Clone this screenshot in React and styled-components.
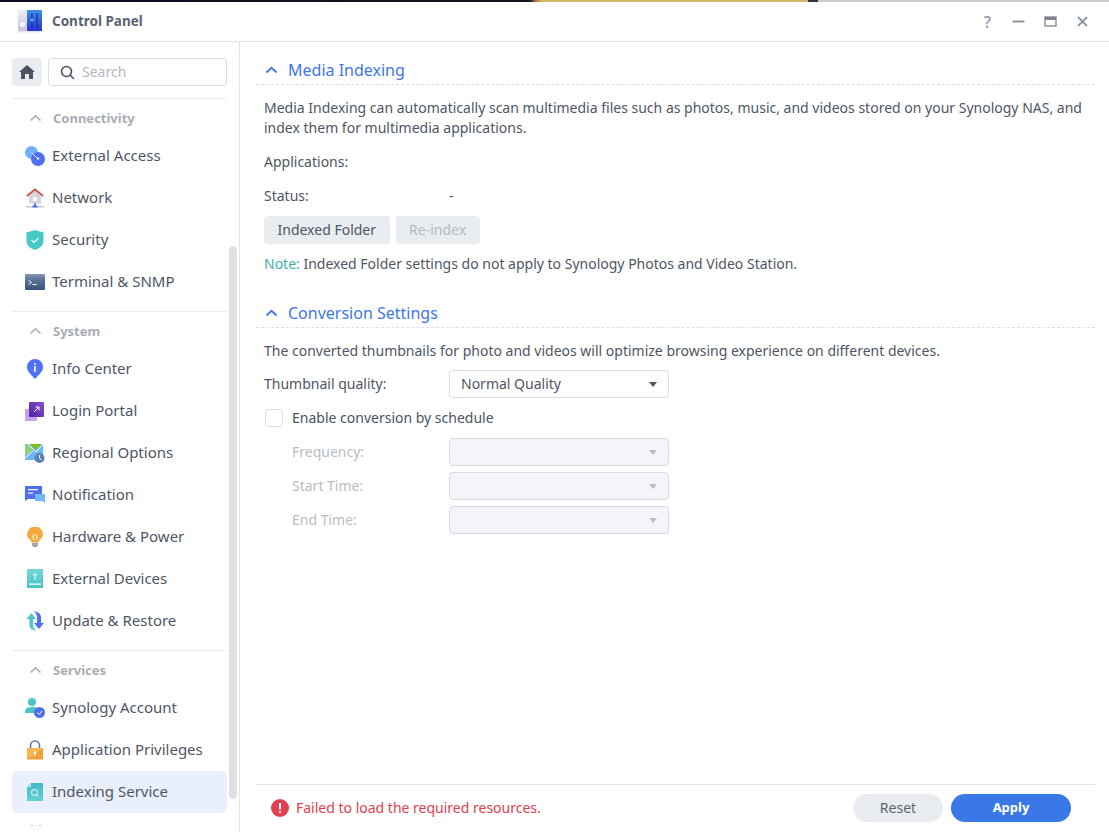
import React from "react";
import styled, { createGlobalStyle } from "styled-components";

const GlobalStyle = createGlobalStyle`
  html, body {
    margin: 0;
    padding: 0;
    height: 100%;
    overflow: hidden;
    background: #fff;
  }
  #root { height: 100%; }
`;

const Page = styled.div`
  display: flex;
  flex-direction: column;
  width: 1109px;
  height: 832px;
  overflow: hidden;
  font-family: "Noto Sans", "Liberation Sans", sans-serif;
  font-size: 14px;
  color: #4a5362;
`;

const DesktopStrip = styled.div`
  flex: none;
  height: 2px;
  background: linear-gradient(
    90deg,
    #0a0d1a 0,
    #11151f 530px,
    #c9743a 536px,
    #d3b768 542px,
    #d3b768 808px,
    #33353a 808px,
    #33353a 818px,
    #cccccc 818px
  );
`;

const TitleBar = styled.header`
  flex: none;
  display: flex;
  align-items: center;
  height: 39px;
  padding: 0 18px;
  border-bottom: 1px solid #e2e5ea;
`;

const AppLogo = styled.svg`
  width: 24px;
  height: 24px;
  margin-right: 10px;
`;

const AppTitle = styled.div`
  flex: 1;
  padding-bottom: 2px;
  font-size: 13.5px;
  font-weight: 700;
  color: #5b6370;
`;

const WindowButtons = styled.div`
  display: flex;
  align-items: center;
  gap: 8px;
  margin-right: -3px;
`;

const WindowButton = styled.button`
  display: flex;
  align-items: center;
  justify-content: center;
  width: 24px;
  height: 24px;
  padding: 0;
  border: none;
  background: none;
  color: #9aa0aa;
  font-family: inherit;
  font-size: 16px;
`;

const HelpButton = styled(WindowButton)`
  padding-left: 3px;
  font-weight: 600;
`;

const Body = styled.div`
  flex: 1;
  display: flex;
  min-height: 0;
`;

const Sidebar = styled.aside`
  position: relative;
  flex: none;
  width: 239px;
  border-right: 1px solid #e2e5ea;
  overflow: hidden;
`;

const SidebarInner = styled.div`
  padding: 16px 0 0 12px;
  width: 215px;
`;

const SearchRow = styled.div`
  display: flex;
  gap: 6px;
  padding-bottom: 12px;
  border-bottom: 1px solid #e6ebf1;
`;

const HomeButton = styled.div`
  display: flex;
  align-items: center;
  justify-content: center;
  width: 30px;
  height: 28px;
  border-radius: 4px;
  background: #e9edf1;
`;

const SearchBox = styled.div`
  flex: 1;
  display: flex;
  align-items: center;
  gap: 7px;
  height: 26px;
  padding: 0 11px;
  border: 1px solid #d5dee9;
  border-radius: 4px;
  color: #b4b8bf;
`;

// Noto sits a pixel low in a centered row, this lifts the text back
const RowText = styled.span`
  margin-bottom: 2px;
`;

const GroupHeader = styled.div`
  display: flex;
  align-items: center;
  height: 32px;
  margin: 3px 0 1px;
  padding-left: 17px;
  gap: 11px;
  font-size: 13px;
  font-weight: 700;
  color: #a8adb6;
`;

const Group = styled.div`
  padding-bottom: 8px;
  border-bottom: ${(p) => (p.$last ? "none" : "1px solid #e6ebf1")};
`;

const NavItem = styled.div`
  display: flex;
  align-items: center;
  height: 42px;
  padding-left: 13px;
  gap: 7px;
  border-radius: 6px;
  font-size: 15px;
  color: #4f5663;
  background: ${(p) => (p.$active ? "#e9f0fb" : "transparent")};
`;

const NavIcon = styled.svg`
  flex: none;
  width: 20px;
  height: 20px;
`;

const ScrollThumb = styled.div`
  position: absolute;
  top: 204px;
  right: 2px;
  width: 8px;
  height: 553px;
  border-radius: 4px;
  background: #e0e0e0;
`;

const Content = styled.main`
  flex: 1;
  min-width: 0;
  display: flex;
  flex-direction: column;
  padding: 0 14px 0 16px;
`;

const Scroll = styled.div`
  flex: 1;
  padding-top: 14px;
`;

const SectionHeader = styled.div`
  display: flex;
  align-items: center;
  gap: 10px;
  height: 28px;
  padding-left: 9px;
  font-size: 16px;
  color: #3f76e8;
  border-bottom: 1px dashed #d9e2ec;
`;

const Section = styled.section`
  margin-bottom: ${(p) => p.$gap || 0}px;
`;

const SectionBody = styled.div`
  padding: 13px 8px 0;
`;

const Paragraph = styled.p`
  margin: 0 0 ${(p) => p.$after}px;
  line-height: 20px;
  color: #4f5663;
`;

const InfoRow = styled.div`
  display: flex;
  align-items: center;
  height: 34px;
  color: #4f5663;
`;

const Label = styled.div`
  width: 185px;
  flex: none;
  margin-bottom: 2px;
  color: ${(p) => (p.$disabled ? "#b9bdc4" : "#4f5663")};
  padding-left: ${(p) => (p.$indent ? "28px" : "0")};
  box-sizing: border-box;
`;

const ButtonRow = styled.div`
  display: flex;
  gap: 6px;
  margin-top: 3px;
`;

const FlatButton = styled.button`
  height: 28px;
  padding: 0 13.5px 2px;
  border: none;
  border-radius: 4px;
  background: #e9edf1;
  color: ${(p) => (p.disabled ? "#b4b8bf" : "#4f5663")};
  font-family: inherit;
  font-size: 14px;
`;

const Note = styled.div`
  margin-top: 10px;
  line-height: 20px;
  color: #4f5663;
`;

const NoteLabel = styled.span`
  color: #3bb0a8;
`;

const Select = styled.div`
  display: flex;
  align-items: center;
  justify-content: space-between;
  box-sizing: border-box;
  width: 220px;
  height: 28px;
  padding: 0 11px;
  border: 1px solid ${(p) => (p.$disabled ? "#d5dbe6" : "#d5dee9")};
  border-radius: 4px;
  background: ${(p) => (p.$disabled ? "#f3f5f9" : "#fff")};
  color: #4f5663;
`;

const Caret = styled.span`
  width: 0;
  height: 0;
  border-left: 4.5px solid transparent;
  border-right: 4.5px solid transparent;
  border-top: 5px solid ${(p) => (p.$disabled ? "#b9bdc4" : "#4f5663")};
`;

const CheckRow = styled.div`
  display: flex;
  align-items: center;
  gap: 9px;
  height: 34px;
  padding-left: 1px;
`;

const CheckBox = styled.span`
  box-sizing: border-box;
  width: 18px;
  height: 18px;
  border: 1px solid #d5dee9;
  border-radius: 4px;
`;

const Footer = styled.footer`
  flex: none;
  display: flex;
  align-items: center;
  box-sizing: border-box;
  height: 48px;
  padding: 0 24px 2px 15px;
  border-top: 1px solid #e2e5ea;
`;

const ErrorText = styled.div`
  flex: 1;
  display: flex;
  align-items: center;
  gap: 7px;
  color: #e0404f;
`;

const PillButton = styled.button`
  height: 28px;
  width: ${(p) => (p.$primary ? "120px" : "90px")};
  margin-left: 8px;
  padding: 0 0 1px;
  border: none;
  border-radius: 14px;
  background: ${(p) => (p.$primary ? "#3a78e8" : "#e9edf1")};
  color: ${(p) => (p.$primary ? "#fff" : "#5b6370")};
  font-family: inherit;
  font-size: ${(p) => (p.$primary ? "13px" : "14px")};
  font-weight: ${(p) => (p.$primary ? 700 : 400)};
`;

const Chevron = ({ color = "#a8adb6", sw = 1.6 }) => (
  <svg width="13" height="8" viewBox="0 0 13 8" fill="none">
    <path d="M1.500 6.500 6.500 1.800l5 4.700" stroke={color} strokeWidth={sw} />
  </svg>
);

const Icon = ({ children }) => <NavIcon viewBox="0 0 20 20">{children}</NavIcon>;

const icons = {
  external: (
    <Icon>
      <circle cx="6.500" cy="6.500" r="6.500" fill="#6fb2f7" />
      <circle cx="13" cy="13" r="7" fill="#4f6ff0" />
      <path d="M6.500 6.500l6 6" stroke="#fff" strokeWidth="0.800" />
      <circle cx="13" cy="12.500" r="1.200" fill="#fff" />
    </Icon>
  ),
  network: (
    <Icon>
      <path d="M2 8l8-6.500L18 8" fill="none" stroke="#d0514f" strokeWidth="2" />
      <path d="M4 8l6-5 6 5v7.500H4z" fill="#d3d6da" />
      <rect x="8" y="9" width="4" height="4" fill="#fff" />
      <rect x="1" y="18" width="18" height="1.600" fill="#c8cdd4" />
      <rect x="9.200" y="15" width="1.600" height="3" fill="#4f6ff0" />
      <rect x="7.500" y="17.500" width="5" height="2" fill="#4f6ff0" />
    </Icon>
  ),
  security: (
    <Icon>
      <path d="M10 0l8.500 2.500v8.500c0 4.500-4 7.500-8.500 9C5.500 18.500 1.500 15.500 1.500 11V2.500z" fill="#46c9c4" />
      <path d="M6.500 10l2.500 2.500 4.500-4.500" fill="none" stroke="#fff" strokeWidth="1.100" />
    </Icon>
  ),
  terminal: (
    <Icon>
      <defs>
        <linearGradient id="term" x1="0" y1="0" x2="0" y2="1">
          <stop offset="0" stopColor="#8496b3" />
          <stop offset="0.35" stopColor="#5c7499" />
          <stop offset="1" stopColor="#375280" />
        </linearGradient>
      </defs>
      <rect x="0" y="2" width="20" height="16" rx="1" fill="url(#term)" />
      <path d="M3.500 8.500l3 2-3 2" fill="none" stroke="#fff" strokeWidth="0.900" />
      <rect x="7.500" y="12" width="4" height="1" fill="#fff" />
    </Icon>
  ),
  info: (
    <Icon>
      <path d="M10 20C6 15.500 2 12.500 2 8a8 8 0 0 1 16 0c0 4.500-4 7.500-8 12z" fill="#4f72f5" />
      <rect x="9.200" y="7" width="1.600" height="6" fill="#fff" />
      <rect x="9.200" y="4" width="1.600" height="1.600" fill="#fff" />
    </Icon>
  ),
  login: (
    <Icon>
      <defs>
        <linearGradient id="login" x1="1" y1="0" x2="0" y2="1">
          <stop offset="0" stopColor="#8a4fd0" />
          <stop offset="1" stopColor="#4f1fa6" />
        </linearGradient>
      </defs>
      <rect x="0" y="8" width="12" height="12" fill="#c3a5ee" />
      <rect x="4" y="1" width="15" height="15" rx="1" fill="url(#login)" />
      <path d="M9 11l5-5M10.500 6H14v3.500" fill="none" stroke="#fff" strokeWidth="1" />
    </Icon>
  ),
  regional: (
    <Icon>
      <rect x="0" y="1" width="18" height="16" fill="#6db6fa" />
      <path d="M0 1h3l5 6-8 6z" fill="#8fd07a" />
      <path d="M5 1h12l-6 6z" fill="#7fc31c" />
      <path d="M3 1l8 8 7-8M0 15l8-7" fill="none" stroke="#fff" strokeWidth="1" />
      <circle cx="14.500" cy="15" r="5" fill="#5d80b5" />
      <path d="M14.500 12v3.300l2 1.300" fill="none" stroke="#fff" strokeWidth="0.900" />
    </Icon>
  ),
  notification: (
    <Icon>
      <path d="M0 1h17v13H3l-3 2z" fill="#4f6ff0" />
      <rect x="3" y="4" width="10" height="1.200" fill="#fff" />
      <rect x="3" y="7.500" width="5" height="1.200" fill="#fff" />
      <path d="M10 9h10v9l-3-2h-7z" fill="#74b4fb" />
    </Icon>
  ),
  hardware: (
    <Icon>
      <path d="M6.500 15.500c0-3-4.500-4-4.500-8a8 8 0 0 1 16 0c0 4-4.500 5-4.500 8z" fill="#f3a93f" />
      <path d="M7 16h6v2l-1 2H8l-1-2z" fill="#a0a8b4" />
      <circle cx="10" cy="10" r="3" fill="#fbd9a0" />
      <rect x="9.500" y="8.500" width="1.200" height="3.500" fill="#d88a1f" />
    </Icon>
  ),
  devices: (
    <Icon>
      <defs>
        <linearGradient id="dev" x1="0" y1="0" x2="0" y2="1">
          <stop offset="0" stopColor="#74d8d6" />
          <stop offset="1" stopColor="#49c4c6" />
        </linearGradient>
      </defs>
      <rect x="2" y="0" width="16" height="19" fill="url(#dev)" />
      <path d="M10 11V4.500M8 6.500l2-2 2 2" fill="none" stroke="#fff" strokeWidth="1" />
      <rect x="4" y="14.500" width="12" height="1.300" fill="#fff" />
    </Icon>
  ),
  update: (
    <Icon>
      <path d="M6.500 2L1.500 8h3v6c0 3 2.500 5.500 6.500 5.500-1.500-1-3-3-3-5.500V8h3z" fill="#4dc4cf" />
      <path d="M9 .5c4 0 7 2.500 7 5.500v6h3l-5 6-5-6h3V6c0-2.500-1.500-4.500-3-5.500z" fill="#4f6ff0" />
    </Icon>
  ),
  account: (
    <Icon>
      <circle cx="7" cy="4" r="4" fill="#49c5c5" />
      <path d="M0 14c0-4 3-5 7-5s5 1 6 2l-3 4H0z" fill="#49c5c5" />
      <circle cx="14.500" cy="14.500" r="5.500" fill="#4f6ff0" />
      <path d="M12 14.500l2 2 3-3.500" fill="none" stroke="#fff" strokeWidth="1" />
    </Icon>
  ),
  privileges: (
    <Icon>
      <path d="M5.500 9V5.500a4.500 4.500 0 0 1 9 0V9" fill="none" stroke="#5d78a8" strokeWidth="1.600" />
      <rect x="2" y="8" width="16" height="11.500" fill="#f0a33a" />
      <path d="M2 8h16L2 19.500z" fill="#f8b84e" />
      <circle cx="10" cy="12.500" r="1.300" fill="#fff" />
      <rect x="9.500" y="13" width="1" height="3" fill="#fff" />
    </Icon>
  ),
  indexing: (
    <Icon>
      <defs>
        <linearGradient id="idx" x1="0" y1="0" x2="0" y2="1">
          <stop offset="0" stopColor="#45bcc8" />
          <stop offset="1" stopColor="#63d0d2" />
        </linearGradient>
      </defs>
      <path d="M6 1h12v18H2V5z" fill="url(#idx)" />
      <path d="M2 5l4-4v4z" fill="#b4ebe8" />
      <circle cx="9.500" cy="10.500" r="3" fill="none" stroke="#fff" strokeWidth="1" />
      <path d="M11.800 12.800l2 2" stroke="#fff" strokeWidth="1" />
    </Icon>
  ),
  next: (
    <Icon>
      <rect x="6" y="1" width="2" height="1" fill="#c4c8ce" />
      <rect x="14" y="1" width="2" height="1" fill="#c4c8ce" />
    </Icon>
  ),
};

const groups = [
  {
    title: "Connectivity",
    items: [
      ["external", "External Access"],
      ["network", "Network"],
      ["security", "Security"],
      ["terminal", "Terminal & SNMP"],
    ],
  },
  {
    title: "System",
    items: [
      ["info", "Info Center"],
      ["login", "Login Portal"],
      ["regional", "Regional Options"],
      ["notification", "Notification"],
      ["hardware", "Hardware & Power"],
      ["devices", "External Devices"],
      ["update", "Update & Restore"],
    ],
  },
  {
    title: "Services",
    items: [
      ["account", "Synology Account"],
      ["privileges", "Application Privileges"],
      ["indexing", "Indexing Service"],
      ["next", ""],
    ],
  },
];

const scheduleRows = ["Frequency:", "Start Time:", "End Time:"];

const App = () => {
  return (
    <Page>
      <GlobalStyle />
      <DesktopStrip />
      <TitleBar>
        <AppLogo viewBox="0 0 24 24">
          <defs>
            <linearGradient id="logoBlue" x1="0" y1="0" x2="0" y2="1">
              <stop offset="0" stopColor="#3a94e8" />
              <stop offset="1" stopColor="#2a30d8" />
            </linearGradient>
            <linearGradient id="logoGrey" x1="0" y1="0" x2="0" y2="1">
              <stop offset="0" stopColor="#eceef4" />
              <stop offset="1" stopColor="#c4c6dc" />
            </linearGradient>
          </defs>
          <rect x="0" y="0" width="10" height="21" rx="1" fill="url(#logoGrey)" />
          <circle cx="4.500" cy="14.500" r="2.500" fill="#f6f7fb" />
          <rect x="9" y="0" width="15" height="21" rx="1" fill="url(#logoBlue)" />
          <path d="M14 3v15M19 3v15" stroke="#0e1f7a" strokeWidth="1" />
          <rect x="12.500" y="8.500" width="3" height="3" rx="1.500" fill="#6fb0f5" />
          <rect x="0" y="21" width="24" height="1.500" fill="#e4e6ee" />
        </AppLogo>
        <AppTitle>Control Panel</AppTitle>
        <WindowButtons>
          <HelpButton>?</HelpButton>
          <WindowButton>
            <svg width="13" height="13" viewBox="0 0 13 13">
              <rect x="0.500" y="5.500" width="12" height="2" fill="#8f95a0" />
            </svg>
          </WindowButton>
          <WindowButton>
            <svg width="13" height="13" viewBox="0 0 13 13">
              <rect x="1" y="2" width="11" height="9" fill="none" stroke="#7d838f" strokeWidth="1.300" />
              <rect x="1" y="2" width="11" height="3" fill="#7d838f" />
            </svg>
          </WindowButton>
          <WindowButton>
            <svg width="13" height="13" viewBox="0 0 13 13">
              <path d="M2 2l9 9M11 2l-9 9" stroke="#8f95a0" strokeWidth="1.800" />
            </svg>
          </WindowButton>
        </WindowButtons>
      </TitleBar>
      <Body>
        <Sidebar>
          <SidebarInner>
            <SearchRow>
              <HomeButton>
                <svg width="16" height="14" viewBox="0 0 16 14">
                  <path d="M8 0l8 7h-2v7h-4V9H6v5H2V7H0z" fill="#4a5362" />
                </svg>
              </HomeButton>
              <SearchBox>
                <svg width="15" height="15" viewBox="0 0 15 15" fill="none">
                  <circle cx="6.500" cy="6.500" r="5" stroke="#4a5362" strokeWidth="1.600" />
                  <path d="M10 10l4 4" stroke="#4a5362" strokeWidth="1.600" />
                </svg>
                <RowText>Search</RowText>
              </SearchBox>
            </SearchRow>
            {groups.map((group, i) => (
              <Group key={group.title} $last={i === groups.length - 1}>
                <GroupHeader>
                  <Chevron />
                  {group.title}
                </GroupHeader>
                {group.items.map(([icon, label]) => (
                  <NavItem key={icon} $active={label === "Indexing Service"}>
                    {icons[icon]}
                    <RowText>{label}</RowText>
                  </NavItem>
                ))}
              </Group>
            ))}
          </SidebarInner>
          <ScrollThumb />
        </Sidebar>
        <Content>
          <Scroll>
            <Section $gap={25}>
              <SectionHeader>
                <Chevron color="#3f76e8" sw={1.8} />
                Media Indexing
              </SectionHeader>
              <SectionBody>
                <Paragraph $after={7}>
                  Media Indexing can automatically scan multimedia files such as photos, music, and videos stored on your Synology NAS, and index them for multimedia applications.
                </Paragraph>
                <InfoRow>
                  <Label>Applications:</Label>
                </InfoRow>
                <InfoRow>
                  <Label>Status:</Label>
                  <RowText>-</RowText>
                </InfoRow>
                <ButtonRow>
                  <FlatButton>Indexed Folder</FlatButton>
                  <FlatButton disabled>Re-index</FlatButton>
                </ButtonRow>
                <Note>
                  <NoteLabel>Note:</NoteLabel> Indexed Folder settings do not apply to Synology Photos and Video Station.
                </Note>
              </SectionBody>
            </Section>
            <Section>
              <SectionHeader>
                <Chevron color="#3f76e8" sw={1.8} />
                Conversion Settings
              </SectionHeader>
              <SectionBody>
                <Paragraph $after={6}>
                  The converted thumbnails for photo and videos will optimize browsing experience on different devices.
                </Paragraph>
                <InfoRow>
                  <Label>Thumbnail quality:</Label>
                  <Select>
                    <RowText>Normal Quality</RowText>
                    <Caret />
                  </Select>
                </InfoRow>
                <CheckRow>
                  <CheckBox />
                  <RowText>Enable conversion by schedule</RowText>
                </CheckRow>
                {scheduleRows.map((label) => (
                  <InfoRow key={label}>
                    <Label $indent $disabled>
                      {label}
                    </Label>
                    <Select $disabled>
                      <span />
                      <Caret $disabled />
                    </Select>
                  </InfoRow>
                ))}
              </SectionBody>
            </Section>
          </Scroll>
          <Footer>
            <ErrorText>
              <svg width="18" height="18" viewBox="0 0 18 18">
                <circle cx="9" cy="9" r="9" fill="#e0404f" />
                <rect x="8" y="4" width="2" height="6.500" rx="0.800" fill="#fff" />
                <rect x="8" y="12" width="2" height="2" rx="0.800" fill="#fff" />
              </svg>
              Failed to load the required resources.
            </ErrorText>
            <PillButton>Reset</PillButton>
            <PillButton $primary>Apply</PillButton>
          </Footer>
        </Content>
      </Body>
    </Page>
  );
};

export default App;
